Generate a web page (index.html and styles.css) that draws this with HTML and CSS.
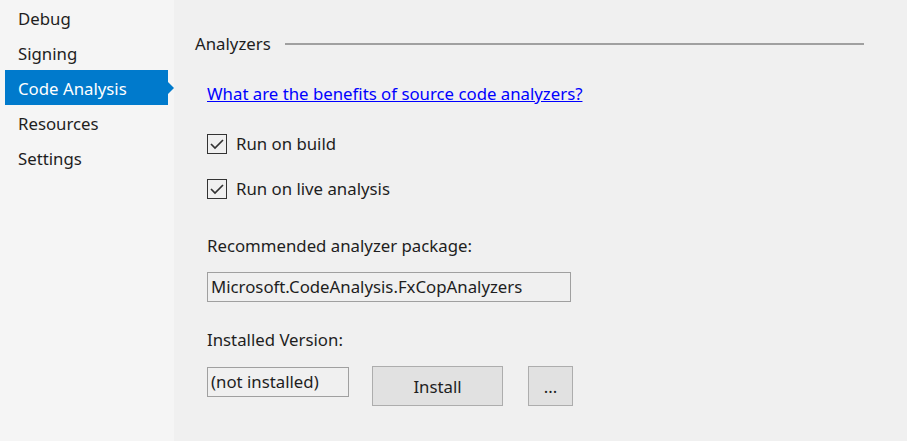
FILE: index.html
```html
<!DOCTYPE html>
<html>
<head>
<meta charset="utf-8">
<link rel="stylesheet" href="styles.css">
</head>
<body>
<div class="app">
  <nav class="sidebar">
    <div class="nav-item">Debug</div>
    <div class="nav-item">Signing</div>
    <div class="nav-item selected">Code Analysis</div>
    <div class="nav-item">Resources</div>
    <div class="nav-item">Settings</div>
  </nav>
  <main class="main">
    <div class="group-header">
      <span class="group-title">Analyzers</span>
      <span class="group-line"></span>
    </div>
    <div class="content">
      <a class="link" href="#">What are the benefits of source code analyzers?</a>
      <label class="check check-first">
        <span class="box"><svg width="18" height="18" viewBox="0 0 18 18"><polyline points="3,9 7,13 15,5" fill="none" stroke="#333" stroke-width="1.7"/></svg></span>
        <span class="check-label">Run on build</span>
      </label>
      <label class="check check-second">
        <span class="box"><svg width="18" height="18" viewBox="0 0 18 18"><polyline points="3,9 7,13 15,5" fill="none" stroke="#333" stroke-width="1.7"/></svg></span>
        <span class="check-label">Run on live analysis</span>
      </label>
      <div class="field-label label-pkg">Recommended analyzer package:</div>
      <div class="textbox textbox-pkg">Microsoft.CodeAnalysis.FxCopAnalyzers</div>
      <div class="field-label label-ver">Installed Version:</div>
      <div class="row">
        <div class="textbox textbox-ver">(not installed)</div>
        <button class="btn btn-install">Install</button>
        <button class="btn btn-more">...</button>
      </div>
    </div>
  </main>
</div>
</body>
</html>
```

FILE: styles.css
```css
html, body {
  margin: 0;
  padding: 0;
  height: 100%;
}
body {
  font-family: "Noto Sans", "Open Sans", sans-serif;
  font-size: 16.8px;
  color: #1e1e1e;
  background: #f0f0f0;
}
.app {
  display: flex;
  height: 441px;
  overflow: hidden;
}
.sidebar {
  width: 174px;
  flex: 0 0 174px;
  background: #f5f5f5;
  display: flex;
  flex-direction: column;
}
.nav-item {
  position: relative;
  height: 35px;
  line-height: 33px;
  padding-top: 2px;
  margin-left: 5px;
  width: 163px;
  padding-left: 13px;
  box-sizing: border-box;
  white-space: nowrap;
}
.nav-item.selected {
  background: #007acc;
  color: #ffffff;
}
.nav-item.selected::after {
  content: "";
  position: absolute;
  right: -6px;
  top: 12px;
  border-top: 6px solid transparent;
  border-bottom: 6px solid transparent;
  border-left: 6px solid #007acc;
}
.main {
  flex: 1;
  background: #f0f0f0;
  padding: 33px 43px 0 21px;
  box-sizing: border-box;
}
.group-header {
  display: flex;
  align-items: center;
  height: 22px;
  gap: 14px;
}
.group-title {
  line-height: 22px;
}
.group-line {
  flex: 1;
  height: 2px;
  background: #a0a0a0;
}
.content {
  margin-left: 12px;
  display: flex;
  flex-direction: column;
  align-items: flex-start;
}
.link {
  margin-top: 28px;
  line-height: 22px;
  color: #0000ff;
  text-decoration: underline;
}
.check {
  display: flex;
  align-items: center;
  height: 20px;
}
.check-first { margin-top: 29px; }
.check-second { margin-top: 25px; }
.box {
  width: 20px;
  height: 20px;
  box-sizing: border-box;
  border: 1px solid #333333;
  background: transparent;
  display: flex;
  align-items: center;
  justify-content: center;
}
.check-label {
  margin-left: 9px;
  line-height: 22px;
}
.field-label {
  line-height: 22px;
}
.label-pkg { margin-top: 36px; }
.label-ver { margin-top: 27px; }
.textbox {
  box-sizing: border-box;
  border: 1px solid #a0a0a0;
  height: 30px;
  line-height: 28px;
  padding-left: 3px;
  white-space: nowrap;
}
.textbox-pkg {
  margin-top: 15px;
  width: 364px;
}
.row {
  margin-top: 15px;
  display: flex;
  align-items: flex-start;
}
.textbox-ver {
  width: 142px;
  margin-top: 1px;
}
.btn {
  font-family: inherit;
  font-size: 16.8px;
  color: #1e1e1e;
  background: #e1e1e1;
  border: 1px solid #adadad;
  height: 40px;
  padding: 0;
  box-sizing: border-box;
}
.btn-install {
  width: 131px;
  margin-left: 23px;
}
.btn-more {
  width: 45px;
  margin-left: 25px;
}
```
